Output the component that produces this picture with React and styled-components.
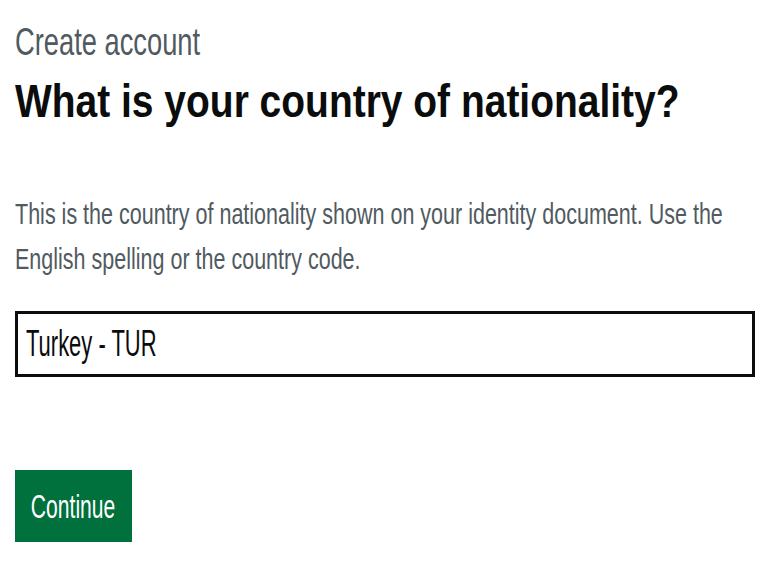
import React from "react";
import styled, { createGlobalStyle } from "styled-components";

const GlobalStyle = createGlobalStyle`
  html, body {
    margin: 0;
    padding: 0;
    background: #ffffff;
    overflow: hidden;
  }
  body {
    font-family: "Liberation Sans", Arial, sans-serif;
    color: #0b0c0c;
  }
`;

// the screenshot's type is narrower than any installed face, so each text run is squeezed
const Squeeze = styled.span`
  display: inline-block;
  white-space: nowrap;
  transform: scaleX(${(props) => props.$x});
  transform-origin: ${(props) => (props.$center ? "center" : "left")} center;
`;

const Page = styled.main`
  display: flex;
  flex-direction: column;
  align-items: flex-start;
  width: 768px;
  box-sizing: border-box;
  padding: 20px 13px 0 15px;
  overflow: hidden;
`;

const Caption = styled.span`
  display: block;
  font-size: 39px;
  line-height: 44px;
  color: #505a5f;
`;

const Heading = styled.h1`
  margin: 12px 0 0;
  font-size: 46px;
  line-height: 50px;
  font-weight: 700;
  color: #0b0c0c;
`;

const Hint = styled.p`
  margin: 65px 0 0;
  font-size: 30px;
  line-height: 45px;
  color: #505a5f;
`;

const HintLine = styled.span`
  display: block;
`;

const Field = styled.div`
  box-sizing: border-box;
  margin-top: 30px;
  width: 740px;
  height: 66px;
  border: 3px solid #0b0c0c;
  padding: 0 8px;
  font-size: 36px;
  line-height: 60px;
  color: #0b0c0c;
  overflow: hidden;
`;

const Button = styled.button`
  display: flex;
  align-items: center;
  justify-content: center;
  margin-top: 93px;
  width: 117px;
  height: 72px;
  padding: 0;
  border: 0;
  border-radius: 0;
  background: #00703c;
  box-shadow: 0 2px 0 #002d18;
  color: #ffffff;
  font-family: "Liberation Sans", Arial, sans-serif;
  font-size: 34px;
  line-height: 1;
  cursor: pointer;
`;

export default function App() {
  return (
    <>
      <GlobalStyle />
      <Page>
        <Caption>
          <Squeeze $x={0.7}>Create account</Squeeze>
        </Caption>
        <Heading>
          <Squeeze $x={0.847}>What is your country of nationality?</Squeeze>
        </Heading>
        <Hint>
          <HintLine>
            <Squeeze $x={0.717}>
              This is the country of nationality shown on your identity document. Use the
            </Squeeze>
          </HintLine>
          <HintLine>
            <Squeeze $x={0.717}>English spelling or the country code.</Squeeze>
          </HintLine>
        </Hint>
        <Field role="textbox" aria-label="Country of nationality">
          <Squeeze $x={0.61}>Turkey - TUR</Squeeze>
        </Field>
        <Button type="button">
          <Squeeze $x={0.62} $center>
            Continue
          </Squeeze>
        </Button>
      </Page>
    </>
  );
}
